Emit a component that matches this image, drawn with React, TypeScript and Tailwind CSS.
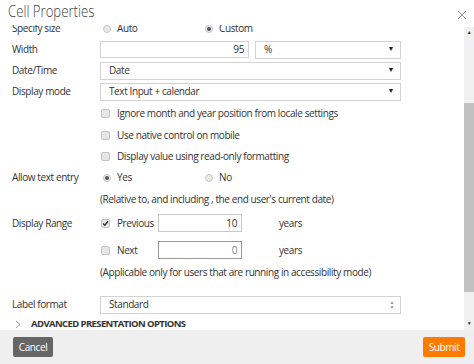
import React from "react";

const Radio = ({ checked }: { checked?: boolean }) => (
  <span className="flex h-[8px] w-[8px] items-center justify-center rounded-full border border-[#c8c8c8] bg-[#e8e8e8]">
    {checked && <span className="h-[4px] w-[4px] rounded-full bg-[#555]" />}
  </span>
);

const Check = ({ checked }: { checked?: boolean }) => (
  <span className="flex h-[9px] w-[9px] items-center justify-center rounded-[2px] border border-[#c4c4c4] bg-[#e6e6e6]">
    {checked && (
      <svg width="7" height="7" viewBox="0 0 7 7">
        <path d="M1 3.6 L2.8 5.3 L6 1.2" stroke="#333" strokeWidth="1.4" fill="none" />
      </svg>
    )}
  </span>
);

const Select = ({ value, w, spin }: { value: string; w: string; spin?: boolean }) => (
  <div className={`flex h-[18px] items-center justify-between border border-[#d3d3d3] bg-white pl-[8px] pr-[6px] ${w}`}>
    <span>{value}</span>
    {spin ? (
      <span className="flex flex-col text-[5px] leading-[5px] text-[#999]">
        <span>▲</span>
        <span>▼</span>
      </span>
    ) : (
      <span className="text-[7px] text-[#222]">▼</span>
    )}
  </div>
);

const Row = ({ label, h, children }: { label?: string; h: string; children?: React.ReactNode }) => (
  <div className={`flex items-center ${h}`}>
    <div className="w-[88px] shrink-0">{label}</div>
    <div className="flex flex-1 items-center">{children}</div>
  </div>
);

export default function App() {
  return (
    <div
      className="flex h-[364px] w-[474px] flex-col overflow-hidden bg-white text-[10px] tracking-[-0.4px] text-[#333]"
      style={{ fontFamily: '"Open Sans", sans-serif' }}
    >
      <div className="flex h-[25px] shrink-0 items-start justify-between pl-[8px] pr-[7px]">
        <h1 className="mt-[-1px] inline-block origin-left scale-x-[0.85] text-[15.5px] font-light leading-[24px] tracking-normal text-[#444]">
          Cell Properties
        </h1>
        <svg width="10" height="10" viewBox="0 0 10 10" className="mt-[10px]">
          <path d="M1 1 L9 9 M9 1 L1 9" stroke="#999" strokeWidth="1" />
        </svg>
      </div>

      <div className="flex min-h-0 flex-1">
        <div className="min-w-0 flex-1 overflow-hidden">
          <div className="mt-[-7px] pl-[12px]">
            <Row label="Specify size" h="h-[21px]">
              <div className="flex w-[105px] items-center gap-[6px] pl-[3px]">
                <Radio />
                <span>Auto</span>
              </div>
              <div className="flex items-center gap-[6px]">
                <Radio checked />
                <span>Custom</span>
              </div>
            </Row>
            <Row label="Width" h="h-[21px]">
              <div className="flex h-[17px] w-[149px] items-center justify-end border border-[#d3d3d3] pr-[4px]">95</div>
              <div className="ml-[6px]">
                <Select value="%" w="w-[146px]" />
              </div>
            </Row>
            <Row label="Date/Time" h="h-[21px]">
              <Select value="Date" w="w-[301px]" />
            </Row>
            <Row label="Display mode" h="h-[21px]">
              <Select value="Text Input + calendar" w="w-[301px]" />
            </Row>
            <Row h="h-[23px]">
              <div className="flex items-center gap-[7px] pl-[1px]">
                <Check />
                <span>Ignore month and year position from locale settings</span>
              </div>
            </Row>
            <Row h="h-[21px]">
              <div className="flex items-center gap-[7px] pl-[1px]">
                <Check />
                <span>Use native control on mobile</span>
              </div>
            </Row>
            <Row h="h-[21px]">
              <div className="flex items-center gap-[7px] pl-[1px]">
                <Check />
                <span>Display value using read-only formatting</span>
              </div>
            </Row>
            <Row label="Allow text entry" h="h-[21px]">
              <div className="flex w-[105px] items-center gap-[6px] pl-[3px]">
                <Radio checked />
                <span>Yes</span>
              </div>
              <div className="flex items-center gap-[6px]">
                <Radio />
                <span>No</span>
              </div>
            </Row>
            <Row h="h-[22px]">
              <span>(Relative to, and including , the end user's current date)</span>
            </Row>
            <Row label="Display Range" h="h-[26px]">
              <div className="flex w-[58px] items-center gap-[7px] pl-[1px]">
                <Check checked />
                <span>Previous</span>
              </div>
              <div className="flex h-[18px] w-[84px] items-center justify-end border border-[#c8c8c8] pr-[4px]">10</div>
              <span className="ml-[37px]">years</span>
            </Row>
            <Row h="h-[28px]">
              <div className="flex w-[58px] items-center gap-[7px] pl-[1px]">
                <Check />
                <span>Next</span>
              </div>
              <div className="flex h-[18px] w-[84px] items-center justify-end border border-[#999] pr-[4px] text-[#888]">0</div>
              <span className="ml-[37px]">years</span>
            </Row>
            <Row h="h-[16px]">
              <span>(Applicable only for users that are running in accessibility mode)</span>
            </Row>
            <div className="h-[14px]" />
            <Row label="Label format" h="h-[21px]">
              <Select value="Standard" w="w-[301px]" spin />
            </Row>
            <div className="flex h-[18px] items-center pl-[3px]">
              <svg width="6" height="9" viewBox="0 0 6 9">
                <path d="M1 1 L5 4.5 L1 8" stroke="#999" strokeWidth="1" fill="none" />
              </svg>
              <span className="ml-[10px] text-[9.5px] font-bold tracking-[-0.6px]">ADVANCED PRESENTATION OPTIONS</span>
            </div>
          </div>
        </div>

        <div className="mt-[2px] flex w-[10px] shrink-0 flex-col bg-[#f0f0f0]">
          <div className="flex h-[12px] items-center justify-center text-[5px] text-[#333]">▲</div>
          <div className="h-[64px]" />
          <div className="h-[189px] bg-[#c1c1c1]" />
          <div className="flex-1" />
          <div className="flex h-[12px] items-center justify-center text-[5px] text-[#333]">▼</div>
        </div>
      </div>

      <div className="flex h-[34px] shrink-0 items-center justify-between bg-[#efefef] pl-[13px] pr-[9px]">
        <button className="h-[20px] w-[40px] rounded-[2px] bg-[#666] text-[10px] text-white">Cancel</button>
        <button className="h-[20px] w-[42px] rounded-[2px] bg-[#ff7b00] text-[10px] text-white">Submit</button>
      </div>
    </div>
  );
}
